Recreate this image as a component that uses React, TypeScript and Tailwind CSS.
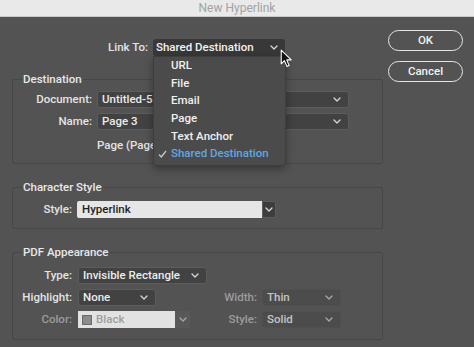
import React from "react";

const Chevron = ({ color = "#d8d8d8" }: { color?: string }) => (
  <svg width="8" height="5" viewBox="0 0 8 5" className="shrink-0">
    <polyline points="1,1 4,4 7,1" fill="none" stroke={color} strokeWidth="1.3" strokeLinecap="round" strokeLinejoin="round" />
  </svg>
);

const DarkSelect = ({ value, width, dim = false }: { value: string; width: string; dim?: boolean }) => (
  <div
    className={`${width} h-[17px] flex items-center justify-between pl-[4px] pr-[7px] rounded-[3px] border ${
      dim ? "bg-[#4c4c4c] border-[#505050] text-[#c4c4c4]" : "bg-[#424242] border-[#5c5c5c] text-[#ececec]"
    }`}
  >
    <span>{value}</span>
    <Chevron color={dim ? "#a8a8a8" : "#d8d8d8"} />
  </div>
);

const Label = ({ text, width, dim = false }: { text: string; width: string; dim?: boolean }) => (
  <div className={`${width} shrink-0 text-right ${dim ? "text-[#9c9c9c]" : "text-[#e4e4e4]"}`}>{text}</div>
);

const Group = ({ title, className, children }: { title: string; className: string; children: React.ReactNode }) => (
  <fieldset className={`border border-[#474747] rounded-[2px] ${className}`}>
    <legend className="ml-[9px] px-[1px] leading-[14px] text-[#e8e8e8]">{title}</legend>
    {children}
  </fieldset>
);

const menuItems = ["URL", "File", "Email", "Page", "Text Anchor", "Shared Destination"];

export default function App() {
  return (
    <div
      className="w-[474px] h-[347px] bg-[#535353] overflow-hidden text-[11.5px] font-medium leading-[17px]"
      style={{ fontFamily: "Roboto, 'Noto Sans', sans-serif" }}
    >
      <div className="h-[17px] bg-[#e9e9e9] border-b border-[#c8c8c8] text-center leading-[16px] text-[#a3a3a3] font-normal text-[12px]">
        New Hyperlink
      </div>

      <div className="flex pl-[12px]">
        <div className="w-[371px]">
          {/* Link To */}
          <div className="flex items-center mt-[22px] h-[17px]">
            <Label text="Link To:" width="w-[136px]" />
            <div className="relative ml-[5px]">
              <div className="w-[132px] h-[17px] flex items-center justify-between pl-[3px] pr-[7px] rounded-[3px] bg-[#383838] text-[#f2f2f2]">
                <span>Shared Destination</span>
                <Chevron />
              </div>
              <svg className="absolute left-[127px] top-[10px] z-20" width="13" height="19" viewBox="0 0 12 18">
                <path d="M1 1 L1 14 L4 11 L6.5 16.5 L8.5 15.6 L6.2 10.3 L10.5 10.3 Z" fill="#111" stroke="#fff" strokeWidth="1" strokeLinejoin="round" />
              </svg>
              <div className="absolute left-0 top-[17px] z-10 w-[133px] pb-[2px] bg-[#4b4b4b] border border-[#3e3e3e] rounded-b-[4px] shadow-[0_3px_8px_rgba(0,0,0,0.35)]">
                {menuItems.map((item) => {
                  const selected = item === "Shared Destination";
                  return (
                    <div
                      key={item}
                      className={`h-[17.6px] flex items-center ${selected ? "text-[#5fa8e3]" : "text-[#f0f0f0]"}`}
                    >
                      <span className="w-[17px] flex justify-center">
                        {selected && (
                          <svg width="9" height="8" viewBox="0 0 9 8">
                            <polyline points="1,4.5 3.3,7 8,1" fill="none" stroke="#c8c8c8" strokeWidth="1.3" />
                          </svg>
                        )}
                      </span>
                      <span>{item}</span>
                    </div>
                  );
                })}
              </div>
            </div>
          </div>

          <Group title="Destination" className="mt-[16px] pt-[5px] pb-[10px]">
            <div className="flex flex-col gap-[5px]">
              <div className="flex items-center h-[17px]">
                <Label text="Document:" width="w-[79px]" />
                <div className="ml-[5px]">
                  <DarkSelect value="Untitled-5" width="w-[252px]" />
                </div>
              </div>
              <div className="flex items-center h-[17px]">
                <Label text="Name:" width="w-[79px]" />
                <div className="ml-[5px]">
                  <DarkSelect value="Page 3" width="w-[252px]" />
                </div>
              </div>
              <div className="flex items-center h-[16px] mt-[2px]">
                <div className="ml-[84px] text-[#e4e4e4]">Page (Page: 3)</div>
              </div>
            </div>
          </Group>

          <Group title="Character Style" className="mt-[16px] pt-[7px] pb-[10px]">
            <div className="flex items-center h-[17px]">
              <Label text="Style:" width="w-[59px]" />
              <div className="ml-[5px] flex h-[17px]">
                <div className="w-[185px] bg-[#e6e6e6] text-[#1e1e1e] flex items-center pl-[5px] rounded-l-[2px]">Hyperlink</div>
                <div className="w-[14px] bg-[#3d3d3d] border border-[#5c5c5c] rounded-r-[2px] flex items-center justify-center">
                  <Chevron />
                </div>
              </div>
            </div>
          </Group>

          <Group title="PDF Appearance" className="mt-[16px] pt-[8px] pb-[11px]">
            <div className="flex flex-col gap-[5px]">
              <div className="flex items-center h-[17px]">
                <Label text="Type:" width="w-[59px]" />
                <div className="ml-[6px]">
                  <DarkSelect value="Invisible Rectangle" width="w-[129px]" />
                </div>
              </div>
              <div className="flex items-center h-[17px]">
                <Label text="Highlight:" width="w-[59px]" />
                <div className="ml-[6px]">
                  <DarkSelect value="None" width="w-[78px]" />
                </div>
                <Label text="Width:" width="w-[101px]" dim />
                <div className="ml-[5px]">
                  <DarkSelect value="Thin" width="w-[79px]" dim />
                </div>
              </div>
              <div className="flex items-center h-[17px]">
                <Label text="Color:" width="w-[59px]" dim />
                <div className="ml-[6px] flex h-[17px]">
                  <div className="w-[97px] bg-[#e2e2e2] flex items-center pl-[4px] gap-[4px] text-[#9e9e9e]">
                    <span className="w-[10px] h-[10px] bg-[#8a8a8a] border border-[#6a6a6a]" />
                    <span>Black</span>
                  </div>
                  <div className="w-[15px] bg-[#585858] flex items-center justify-center">
                    <Chevron color="#a8a8a8" />
                  </div>
                </div>
                <Label text="Style:" width="w-[67px]" dim />
                <div className="ml-[5px]">
                  <DarkSelect value="Solid" width="w-[79px]" dim />
                </div>
              </div>
            </div>
          </Group>
        </div>

        <div className="ml-[5px] mt-[13px] flex flex-col gap-[10px]">
          <button className="w-[75px] h-[21px] rounded-full border-[1.5px] border-[#e6e6e6] text-[#f2f2f2] leading-none">OK</button>
          <button className="w-[75px] h-[21px] rounded-full border-[1.5px] border-[#e6e6e6] text-[#f2f2f2] leading-none">Cancel</button>
        </div>
      </div>
    </div>
  );
}
